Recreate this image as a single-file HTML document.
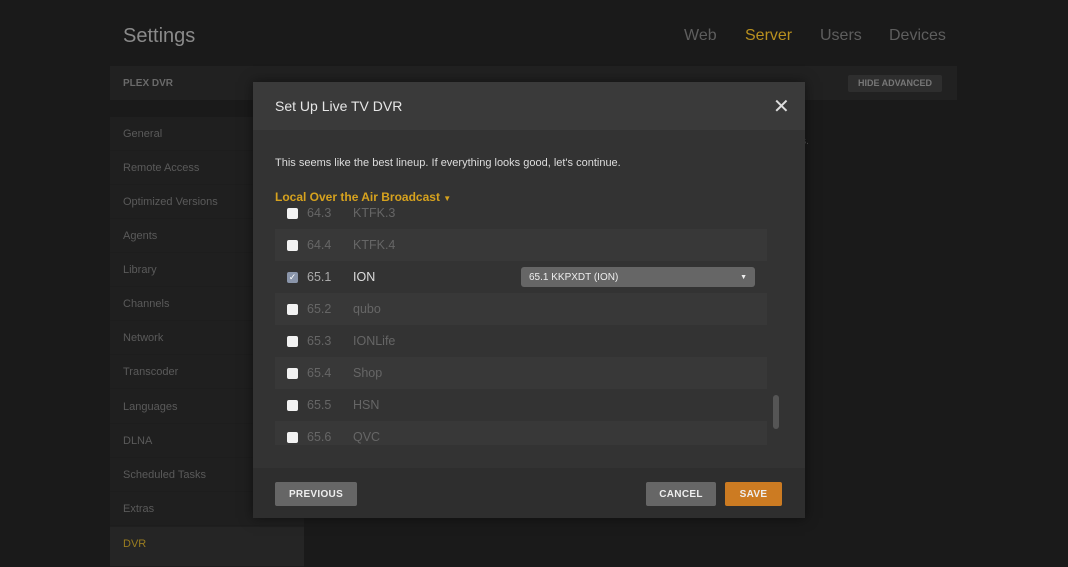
<!DOCTYPE html>
<html><head><style>
*{margin:0;padding:0;box-sizing:border-box}
body{width:1068px;height:567px;background:#1a1a1a;font-family:"Liberation Sans",sans-serif;position:relative;overflow:hidden}
.a{position:absolute}
.side div{position:absolute;left:0;width:194px;height:34px;line-height:34px;padding-left:13px;font-size:11px;color:#5a5a5a;border-bottom:1px solid #1d1d1d}
.row{position:absolute;left:0;width:492px;height:32px;font-size:12.5px;color:#666}
.row .cb{position:absolute;left:12px;top:11px;width:11px;height:11px;background:#f2f2f2;border-radius:2px}
.row .n{position:absolute;left:32px;top:9px}
.row .t{position:absolute;left:78px;top:9px}
.btn{position:absolute;height:24px;line-height:24px;text-align:center;font-size:10px;font-weight:bold;color:#eee;border-radius:2px;letter-spacing:.3px}
</style></head><body>
<div class="a" style="left:123px;top:25px;font-size:20px;color:#8a8a8a">Settings</div>
<div class="a" style="left:684px;top:27px;font-size:16px;color:#5e5e5e">Web</div>
<div class="a" style="left:745px;top:27px;font-size:16px;color:#b8901f">Server</div>
<div class="a" style="left:820px;top:27px;font-size:16px;color:#5e5e5e">Users</div>
<div class="a" style="left:889px;top:27px;font-size:16px;color:#5e5e5e">Devices</div>
<div class="a" style="left:110px;top:66px;width:847px;height:34px;background:#212121"></div>
<div class="a" style="left:123px;top:78px;font-size:10px;font-weight:bold;color:#6a6a6a">PLEX DVR</div>
<div class="a" style="left:848px;top:75px;width:94px;height:17px;background:#2e2e2e;border-radius:2px;font-size:9px;font-weight:bold;color:#777;text-align:center;line-height:17px">HIDE ADVANCED</div>
<div class="a" style="left:790px;top:136px;font-size:10px;color:#555">ngs.</div>
<div class="a side" style="left:110px;top:117px;width:194px;height:450px;background:#1f1f1f">
<div style="top:0">General</div><div style="top:34px">Remote Access</div><div style="top:68px">Optimized Versions</div><div style="top:102px">Agents</div><div style="top:136px">Library</div><div style="top:170px">Channels</div><div style="top:204px">Network</div><div style="top:238px">Transcoder</div><div style="top:273px">Languages</div><div style="top:307px">DLNA</div><div style="top:341px">Scheduled Tasks</div><div style="top:375px">Extras</div><div style="top:410px;background:#252525;color:#9a7d20;height:40px">DVR</div>
</div>
<div class="a" style="left:253px;top:82px;width:552px;height:436px;background:#333;box-shadow:0 0 12px rgba(0,0,0,.5)">
<div class="a" style="left:0;top:0;width:552px;height:48px;background:#3a3a3a"></div>
<div class="a" style="left:22px;top:16px;font-size:14px;color:#e6e6e6">Set Up Live TV DVR</div>
<div class="a" style="left:520px;top:12px;font-size:20px;color:#ddd">✕</div>
<div class="a" style="left:22px;top:75px;font-size:11px;color:#ddd">This seems like the best lineup. If everything looks good, let's continue.</div>
<div class="a" style="left:22px;top:108px;font-size:12px;font-weight:bold;color:#d6a21e">Local Over the Air Broadcast <span style="font-size:8px">▼</span></div>
<div class="a" style="left:22px;top:126px;width:492px;height:237px;overflow:hidden">
<div class="row" style="top:-11px;background:#333"><div class="cb"></div><div class="n">64.3</div><div class="t">KTFK.3</div></div>
<div class="row" style="top:21px;background:#383838"><div class="cb"></div><div class="n">64.4</div><div class="t">KTFK.4</div></div>
<div class="row" style="top:53px;background:#333;color:#ddd"><div class="cb" style="background:#8a95aa;color:#fff;font-size:9px;line-height:11px;text-align:center">✓</div><div class="n" style="color:#aaa">65.1</div><div class="t">ION</div>
<div class="a" style="left:246px;top:6px;width:234px;height:20px;background:#666;border-radius:3px;font-size:10px;color:#eee;line-height:21px;padding-left:8px">65.1 KKPXDT (ION)<span style="position:absolute;right:8px;font-size:7px">▼</span></div></div>
<div class="row" style="top:85px;background:#383838"><div class="cb"></div><div class="n">65.2</div><div class="t">qubo</div></div>
<div class="row" style="top:117px;background:#333"><div class="cb"></div><div class="n">65.3</div><div class="t">IONLife</div></div>
<div class="row" style="top:149px;background:#383838"><div class="cb"></div><div class="n">65.4</div><div class="t">Shop</div></div>
<div class="row" style="top:181px;background:#333"><div class="cb"></div><div class="n">65.5</div><div class="t">HSN</div></div>
<div class="row" style="top:213px;background:#383838"><div class="cb"></div><div class="n">65.6</div><div class="t">QVC</div></div>
</div>
<div class="a" style="left:520px;top:313px;width:6px;height:34px;background:#555;border-radius:3px"></div>
<div class="a" style="left:0;top:386px;width:552px;height:50px;background:#2e2e2e"></div>
<div class="btn" style="left:22px;top:400px;width:82px;background:#666;line-height:25px">PREVIOUS</div>
<div class="btn" style="left:393px;top:400px;width:70px;background:#666;line-height:25px">CANCEL</div>
<div class="btn" style="left:472px;top:400px;width:57px;background:#cc7b22;line-height:25px">SAVE</div>
</div>
</body></html>
